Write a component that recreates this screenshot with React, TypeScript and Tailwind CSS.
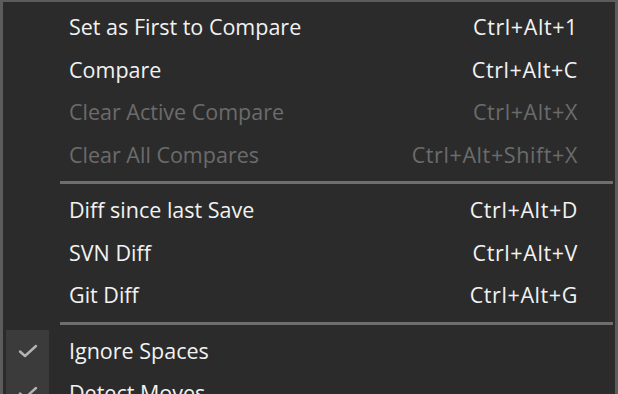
import React from 'react';

type Item =
  | { kind: 'item'; label: string; shortcut?: string; disabled?: boolean; checked?: boolean }
  | { kind: 'sep' };

const items: Item[] = [
  { kind: 'item', label: 'Set as First to Compare', shortcut: 'Ctrl+Alt+1' },
  { kind: 'item', label: 'Compare', shortcut: 'Ctrl+Alt+C' },
  { kind: 'item', label: 'Clear Active Compare', shortcut: 'Ctrl+Alt+X', disabled: true },
  { kind: 'item', label: 'Clear All Compares', shortcut: 'Ctrl+Alt+Shift+X', disabled: true },
  { kind: 'sep' },
  { kind: 'item', label: 'Diff since last Save', shortcut: 'Ctrl+Alt+D' },
  { kind: 'item', label: 'SVN Diff', shortcut: 'Ctrl+Alt+V' },
  { kind: 'item', label: 'Git Diff', shortcut: 'Ctrl+Alt+G' },
  { kind: 'sep' },
  { kind: 'item', label: 'Ignore Spaces', checked: true },
  { kind: 'item', label: 'Detect Moves', checked: true },
];

const Check = () => (
  <svg width="20" height="14" viewBox="0 0 20 14" fill="none">
    <path d="M2 7.5 L7 12 L18 2" stroke="#b4b4b4" strokeWidth="2.4" strokeLinecap="round" strokeLinejoin="round" />
  </svg>
);

export default function App() {
  return (
    <div className="w-[618px] h-[394px] overflow-hidden bg-[#2b2b2b] border-t-2 border-l-[3px] border-r-[3px] border-[#5c5c5c] pt-[4px] font-['Open_Sans',sans-serif] text-[21.5px]">
      {items.map((it, i) => {
        if (it.kind === 'sep') {
          return (
            <div key={i} className="h-[13px] flex items-center pl-[57px] pr-[2px]">
              <div className="h-[3px] w-full bg-[#6e6e6e]" />
            </div>
          );
        }
        const color = it.disabled ? 'text-[#6b6b6b]' : 'text-[#f2f2f2]';
        return (
          <div key={i} className="h-[42.5px] flex items-center">
            <div className="w-[66px] h-full flex items-center pl-[3px]">
              {it.checked && (
                <div className="w-[43px] h-full bg-[#3b3b3b] flex items-center justify-center">
                  <Check />
                </div>
              )}
            </div>
            <span className={color}>{it.label}</span>
            <span className={`ml-auto pr-[37px] tracking-[0.6px] ${color}`}>{it.shortcut}</span>
          </div>
        );
      })}
    </div>
  );
}
